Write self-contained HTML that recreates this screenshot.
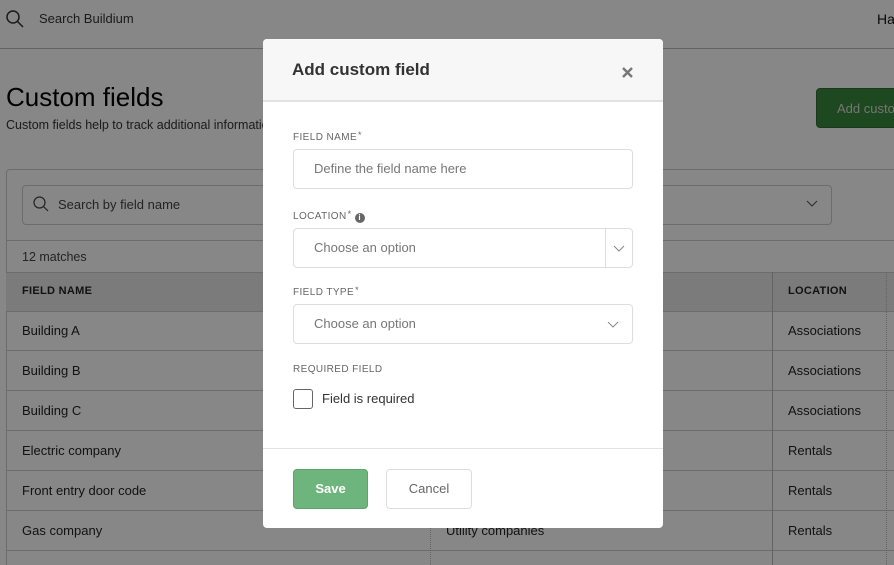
<!DOCTYPE html>
<html><head><style>
*{box-sizing:border-box;margin:0;padding:0}
html,body{width:894px;height:565px;overflow:hidden}
body{position:relative;font-family:"Liberation Sans",sans-serif;background:#fff;color:#222}
.a{position:absolute}
.row{position:absolute;left:6px;width:888px;height:40px;border-bottom:1px solid #ccc;font-size:13px}
.row span{position:absolute;top:12px}
.vl{position:absolute;top:272px;height:293px;border-left:1px dotted #bbb}
.ov{position:absolute;left:0;top:0;width:894px;height:565px;background:rgba(0,0,0,0.47)}
.lbl{position:absolute;left:293px;font-size:10px;color:#666;letter-spacing:.4px}
.lbl i{font-style:normal;font-size:9px;position:relative;top:-2px;margin-left:1px}
.box{position:absolute;left:293px;width:340px;height:40px;border:1px solid #ddd;border-radius:4px;font-size:13px;color:#777;padding:11px 20px}
</style></head><body>
<svg class="a" style="left:5px;top:9px" width="20" height="20" viewBox="0 0 20 20"><circle cx="8" cy="8" r="6" fill="none" stroke="#333" stroke-width="1.5"/><line x1="12.5" y1="12.5" x2="18" y2="18" stroke="#333" stroke-width="1.5"/></svg>
<div class="a" style="left:39px;top:11px;font-size:13px;color:#333">Search Buildium</div>
<div class="a" style="left:877px;top:11px;font-size:14px;color:#111">Ha</div>
<div class="a" style="left:0;top:48px;width:894px;border-top:1px solid #bbb"></div>
<div class="a" style="left:6px;top:82px;font-size:26px;color:#000">Custom fields</div>
<div class="a" style="left:6px;top:118px;font-size:12.5px;color:#333">Custom fields help to track additional information</div>
<div class="a" style="left:816px;top:88px;width:90px;height:40px;background:#3a8a3e;border:1px solid #2f6f33;border-radius:4px;color:#ddd;font-size:13px;padding:12px 20px;white-space:nowrap">Add custom field</div>
<div class="a" style="left:6px;top:169px;width:888px;height:396px;border:1px solid #ccc;border-bottom:none;border-right:none;border-radius:4px 0 0 0"></div>
<div class="a" style="left:22px;top:185px;width:300px;height:40px;border:1px solid #ccc;border-radius:4px"></div>
<svg class="a" style="left:32px;top:195px" width="18" height="18" viewBox="0 0 18 18"><circle cx="7.5" cy="7.5" r="5.5" fill="none" stroke="#444" stroke-width="1.2"/><line x1="11.5" y1="11.5" x2="16" y2="16" stroke="#444" stroke-width="1.2"/></svg>
<div class="a" style="left:58px;top:197px;font-size:13px;color:#444">Search by field name</div>
<div class="a" style="left:560px;top:185px;width:272px;height:40px;border:1px solid #ccc;border-radius:4px"></div>
<svg class="a" style="left:806px;top:200px" width="12" height="8"><path d="M1 1l5 5 5-5" fill="none" stroke="#555"/></svg>
<div class="a" style="left:6px;top:240px;width:888px;border-top:1px solid #ccc"></div>
<div class="a" style="left:22px;top:250px;font-size:12.5px;color:#444">12 matches</div>
<div class="a" style="left:6px;top:272px;width:888px;height:40px;background:#e8e8e8;border-top:1px solid #ccc;border-bottom:1px solid #ccc"></div>
<div class="a" style="left:22px;top:285px;font-size:11px;font-weight:bold;color:#222;letter-spacing:.3px">FIELD NAME</div>
<div class="a" style="left:788px;top:285px;font-size:11px;font-weight:bold;color:#222;letter-spacing:.3px">LOCATION</div>
<div class="row" style="top:311px"><span style="left:16px">Building A</span><span style="left:782px">Associations</span></div>
<div class="row" style="top:351px"><span style="left:16px">Building B</span><span style="left:782px">Associations</span></div>
<div class="row" style="top:391px"><span style="left:16px">Building C</span><span style="left:782px">Associations</span></div>
<div class="row" style="top:431px"><span style="left:16px">Electric company</span><span style="left:782px">Rentals</span></div>
<div class="row" style="top:471px"><span style="left:16px">Front entry door code</span><span style="left:782px">Rentals</span></div>
<div class="row" style="top:511px"><span style="left:16px">Gas company</span><span style="left:440px">Utility companies</span><span style="left:782px">Rentals</span></div>
<div class="vl" style="left:430px"></div><div class="vl" style="left:772px;border-left-style:solid"></div><div class="vl" style="left:886px"></div>
<div class="ov"></div>
<div class="a" style="left:263px;top:39px;width:400px;height:489px;background:#fff;border-radius:4px;overflow:hidden">
<div class="a" style="left:0;top:0;width:400px;height:63px;background:#f7f7f7;border-bottom:2px solid #e2e2e2"></div>
<div class="a" style="left:29px;top:21px;font-size:17px;font-weight:bold;color:#333">Add custom field</div>
<svg class="a" style="left:358px;top:27px" width="13" height="13"><path d="M2 2l9 9M11 2l-9 9" stroke="#777" stroke-width="2.4"/></svg>
</div>
<div class="lbl" style="top:132px">FIELD NAME<i>*</i></div>
<div class="box" style="top:149px">Define the field name here</div>
<div class="lbl" style="top:211px">LOCATION<i>*</i> <span style="display:inline-block;width:10px;height:10px;border-radius:50%;background:#666;color:#fff;font-size:8px;text-align:center;line-height:10px;font-weight:bold;vertical-align:-1px">i</span></div>
<div class="box" style="top:228px">Choose an option</div>
<div class="a" style="left:605px;top:229px;height:38px;border-left:1px solid #ddd"></div>
<svg class="a" style="left:613px;top:245px" width="12" height="7"><path d="M1 1l5 5 5-5" fill="none" stroke="#888"/></svg>
<div class="lbl" style="top:287px">FIELD TYPE<i>*</i></div>
<div class="box" style="top:304px">Choose an option</div>
<svg class="a" style="left:607px;top:321px" width="12" height="7"><path d="M1 1l5 5 5-5" fill="none" stroke="#888"/></svg>
<div class="lbl" style="top:364px">REQUIRED FIELD</div>
<div class="a" style="left:293px;top:389px;width:20px;height:20px;border:1px solid #666;border-radius:3px"></div>
<div class="a" style="left:322px;top:391px;font-size:13px;color:#333">Field is required</div>
<div class="a" style="left:263px;top:448px;width:400px;border-top:1px solid #e2e2e2"></div>
<div class="a" style="left:293px;top:469px;width:75px;height:40px;background:#6db57c;border:1px solid #5da36c;border-radius:4px;color:#fff;font-size:13px;font-weight:bold;text-align:center;line-height:38px">Save</div>
<div class="a" style="left:386px;top:469px;width:86px;height:40px;background:#fff;border:1px solid #ddd;border-radius:4px;color:#666;font-size:13px;text-align:center;line-height:38px">Cancel</div>
</body></html>
